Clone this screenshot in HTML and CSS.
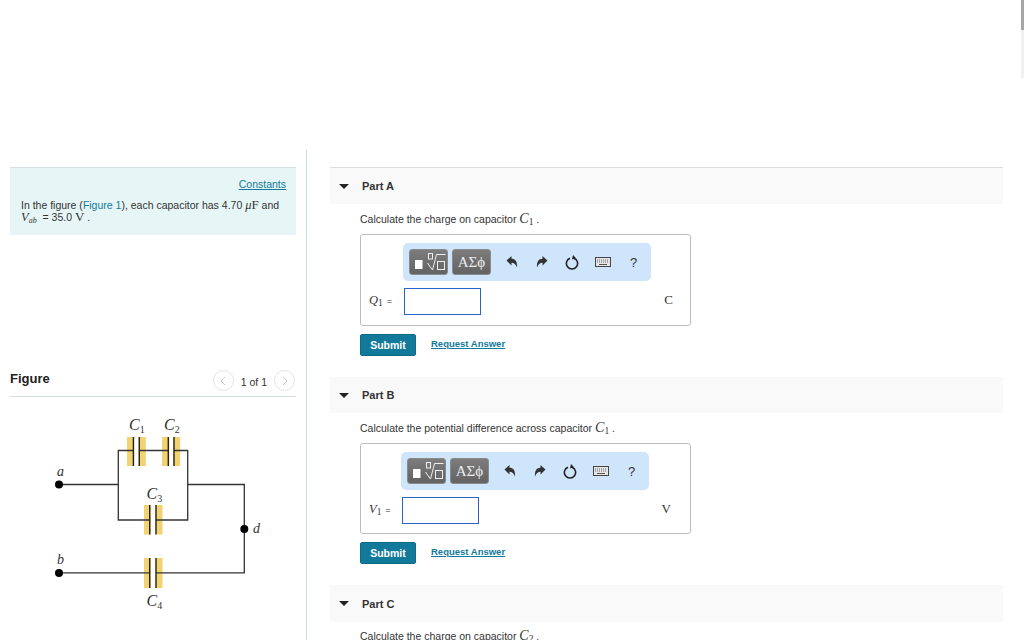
FILE: index.html
```html
<!DOCTYPE html>
<html lang="en">
<head>
<meta charset="utf-8">
<title>Capacitors</title>
<link rel="stylesheet" href="styles.css">
</head>
<body>
<div class="scroll"><div class="scroll-thumb"></div></div>
<main class="page">
  <section class="left">
    <div class="intro">
      <div class="constants"><a href="#">Constants</a></div>
      <p class="intro-text">In the figure (<span class="link">Figure 1</span>), each capacitor has 4.70 <span class="m">μ</span><span class="r">F</span> and<br><span class="m vab">V<sub>ab</sub></span> = 35.0 <span class="r">V</span> .</p>
    </div>
    <div class="fig-head">
      <h2>Figure</h2>
      <div class="pager">
        <span class="circle"><svg width="8" height="10" viewBox="0 0 8 10"><path d="M6 1L2 5l4 4" fill="none" stroke="#c4c4c4" stroke-width="1"/></svg></span>
        <span class="pager-text">1 of 1</span>
        <span class="circle"><svg width="8" height="10" viewBox="0 0 8 10"><path d="M2 1l4 4-4 4" fill="none" stroke="#c4c4c4" stroke-width="1"/></svg></span>
      </div>
    </div>
    <svg class="circuit" width="286" height="243" viewBox="10 397 286 243">
      <g fill="#f2d371">
        <rect x="127" y="437" width="7.3" height="29"/><rect x="138.5" y="437" width="7.3" height="29"/>
        <rect x="162" y="437" width="7.3" height="29"/><rect x="173.3" y="437" width="6.9" height="29"/>
        <rect x="144" y="505" width="6.9" height="29.5"/><rect x="155.6" y="505" width="6.9" height="29.5"/>
        <rect x="144" y="558" width="6.9" height="30"/><rect x="155.6" y="558" width="6.9" height="30"/>
      </g>
      <g fill="none" stroke="#333" stroke-width="1.3">
        <path d="M133.4 450.5H118.3V520H149.7M156 520H187.7V450.5H174M168.3 450.5H139.3"/>
        <path d="M59 484.5H118M188 484.5H244.3V572.8H156M149.7 572.8H59"/>
      </g>
      <g stroke="#222" stroke-width="1.4">
        <path d="M133.4 437V466M139.3 437V466M168.3 437V466M174 437V466"/>
        <path d="M149.7 505V534.5M156 505V534.5M149.7 558V588M156 558V588"/>
      </g>
      <g fill="#000"><circle cx="59" cy="484.5" r="4"/><circle cx="59" cy="573" r="4"/><circle cx="244.3" cy="529" r="4"/></g>
      <g class="lbl">
        <text x="129" y="430">C<tspan class="lbl-sub" dy="3">1</tspan></text>
        <text x="164" y="430">C<tspan class="lbl-sub" dy="3">2</tspan></text>
        <text x="146.5" y="499">C<tspan class="lbl-sub" dy="3">3</tspan></text>
        <text x="146.5" y="606">C<tspan class="lbl-sub" dy="3">4</tspan></text>
        <text class="pt" x="57" y="476">a</text><text class="pt" x="57" y="564">b</text><text class="pt" x="253" y="533">d</text>
      </g>
    </svg>
  </section>
  <section class="right">
    <article class="part part-a">
      <header class="part-head"><span class="tri"></span><h3>Part A</h3></header>
      <div class="part-body">
        <p class="prompt">Calculate the charge on capacitor <span class="m big">C</span><sub class="sub1">1</sub> .</p>
        <div class="answer">
          <div class="toolbar">
            <span class="tbtn t1"><svg width="36" height="24" viewBox="0 0 36 24"><rect x="4" y="10" width="7.500" height="9" fill="#fff"/><rect x="17.500" y="3.500" width="4" height="5.500" fill="none" stroke="#eee"/><path d="M16.500 13l5 7 4-15.500h9" fill="none" stroke="#eee"/><rect x="26.500" y="11.500" width="7" height="8" fill="none" stroke="#eee"/></svg></span>
            <span class="tbtn t2">ΑΣϕ</span>
            <svg class="ic ic-undo" width="12" height="12" viewBox="0 0 12 12"><path d="M0.5 4.500L5.500 0V2.800c4 0 6 3 5.500 8.700C10 8.500 8 6.800 5.500 6.800V9.500z" fill="#333"/></svg>
            <svg class="ic ic-redo" width="12" height="12" viewBox="0 0 12 12"><path d="M11.500 4.500L6.500 0V2.800c-4 0-6 3-5.500 8.700C2 8.500 4 6.800 6.500 6.800V9.500z" fill="#333"/></svg>
            <svg class="ic ic-reset" width="14" height="16" viewBox="0 0 14 16"><path d="M5 4.200a5.600 5.600 0 1 0 4 0" fill="none" stroke="#222" stroke-width="1.600"/><path d="M8 1l3 3.300-4 1.200z" fill="#222"/></svg>
            <svg class="ic ic-kbd" width="16" height="10" viewBox="0 0 16 10"><rect x="0.500" y="0.500" width="15" height="9" fill="#e6e6e6" stroke="#444"/><path d="M2 3h12M2 5h12" stroke="#666" stroke-dasharray="1 1"/><path d="M4 7.500h8" stroke="#555"/></svg>
            <span class="help">?</span>
          </div>
          <div class="row">
            <label class="var"><span class="m">Q</span><sub class="sub1">1</sub> <span class="eq">=</span></label>
            <span class="input"></span>
            <span class="unit">C</span>
          </div>
        </div>
        <div class="actions"><button class="submit">Submit</button><a class="req" href="#">Request Answer</a></div>
      </div>
    </article>
    <article class="part part-b">
      <header class="part-head"><span class="tri"></span><h3>Part B</h3></header>
      <div class="part-body">
        <p class="prompt">Calculate the potential difference across capacitor <span class="m big">C</span><sub class="sub1">1</sub> .</p>
        <div class="answer">
          <div class="toolbar">
            <span class="tbtn t1"><svg width="36" height="24" viewBox="0 0 36 24"><rect x="4" y="10" width="7.500" height="9" fill="#fff"/><rect x="17.500" y="3.500" width="4" height="5.500" fill="none" stroke="#eee"/><path d="M16.500 13l5 7 4-15.500h9" fill="none" stroke="#eee"/><rect x="26.500" y="11.500" width="7" height="8" fill="none" stroke="#eee"/></svg></span>
            <span class="tbtn t2">ΑΣϕ</span>
            <svg class="ic ic-undo" width="12" height="12" viewBox="0 0 12 12"><path d="M0.5 4.500L5.500 0V2.800c4 0 6 3 5.500 8.700C10 8.500 8 6.800 5.500 6.800V9.500z" fill="#333"/></svg>
            <svg class="ic ic-redo" width="12" height="12" viewBox="0 0 12 12"><path d="M11.500 4.500L6.500 0V2.800c-4 0-6 3-5.500 8.700C2 8.500 4 6.800 6.500 6.800V9.500z" fill="#333"/></svg>
            <svg class="ic ic-reset" width="14" height="16" viewBox="0 0 14 16"><path d="M5 4.200a5.600 5.600 0 1 0 4 0" fill="none" stroke="#222" stroke-width="1.600"/><path d="M8 1l3 3.300-4 1.200z" fill="#222"/></svg>
            <svg class="ic ic-kbd" width="16" height="10" viewBox="0 0 16 10"><rect x="0.500" y="0.500" width="15" height="9" fill="#e6e6e6" stroke="#444"/><path d="M2 3h12M2 5h12" stroke="#666" stroke-dasharray="1 1"/><path d="M4 7.500h8" stroke="#555"/></svg>
            <span class="help">?</span>
          </div>
          <div class="row">
            <label class="var"><span class="m">V</span><sub class="sub1">1</sub> <span class="eq">=</span></label>
            <span class="input"></span>
            <span class="unit">V</span>
          </div>
        </div>
        <div class="actions"><button class="submit">Submit</button><a class="req" href="#">Request Answer</a></div>
      </div>
    </article>
    <article class="part part-c">
      <header class="part-head"><span class="tri"></span><h3>Part C</h3></header>
      <div class="part-body">
        <p class="prompt">Calculate the charge on capacitor <span class="m big">C</span><sub class="sub1">2</sub> .</p>
      </div>
    </article>
  </section>
</main>
</body>
</html>
```
FILE: styles.css
```css
* { box-sizing: border-box; }
html, body { margin: 0; height: 640px; overflow: hidden; background: #fff; }
body { font-family: "Liberation Sans", Arial, sans-serif; font-size: 10.5px; color: #333; }
p, h2, h3 { margin: 0; }
a { color: #117a9b; }
.link { color: #117a9b; }
.m { font-family: "Liberation Serif", serif; font-style: italic; font-size: 12.5px; line-height: 0; }
.m.big { font-size: 14px; }
.m.vab { margin-right: 3px; }
.r { font-family: "Liberation Serif", serif; font-size: 13px; line-height: 0; }
sub { font-size: 8px; line-height: 0; vertical-align: -2px; font-style: italic; }
.sub1 { font-family: "Liberation Serif", serif; font-style: normal; font-size: 9.5px; }
.eq { font-size: 9px; margin-left: 1px; }

.scroll { position: absolute; top: 0; right: 0; width: 3px; height: 78px; background: #f1f1f1; }
.scroll-thumb { height: 30px; background: #a6a6a6; }

.page { display: flex; padding-top: 150px; height: 640px; }
.left { width: 307px; height: 490px; padding: 17px 10px 0; border-right: 1px solid #c8d9e9; flex: none; }
.intro { width: 286px; height: 68px; background: #e6f6f7; border-top: 1px solid #d3dfe3; padding: 10px 10px 0 11px; }
.constants { text-align: right; line-height: 13px; }
.intro-text { margin-top: 8px; line-height: 12px; }
.fig-head { width: 286px; height: 30px; margin-top: 132px; border-bottom: 1px solid #d5dde2; display: flex; justify-content: space-between; align-items: flex-start; padding-top: 3px; }
.fig-head h2 { font-size: 13px; font-weight: bold; color: #222; line-height: 16px; margin-top: 1px; }
.pager { display: flex; align-items: center; gap: 7px; font-size: 10.5px; margin-right: 1px; }
.pager-text { padding-top: 2px; }
.circle { width: 21px; height: 21px; border: 1px solid #e4e4e4; border-radius: 50%; display: flex; align-items: center; justify-content: center; }
.circuit { display: block; }
.lbl text { font-family: "Liberation Serif", serif; font-style: italic; font-size: 16px; fill: #333; }
.lbl text.pt { font-size: 14px; }
.lbl .lbl-sub { font-size: 10px; font-style: normal; }

.right { flex: 1; padding: 17px 21px 0 23px; }
.part-head { height: 37px; background: #f9f9f9; display: flex; align-items: center; padding-left: 9px; }
.part-a .part-head { border-top: 1px solid #dcdcdc; }
.part-b, .part-c { margin-top: 21px; }
.part-b .part-head { height: 36px; }
.tri { width: 0; height: 0; border-left: 5px solid transparent; border-right: 5px solid transparent; border-top: 5px solid #222; }
h3 { font-size: 11px; font-weight: bold; margin-left: 13px; color: #333; }
.part-body { padding: 8px 0 0 30px; }
.part-c .part-body { padding-top: 7px; }
.prompt { line-height: 14px; white-space: nowrap; }
.answer { width: 331px; height: 92px; margin-top: 8px; border: 1px solid #bdbdbd; border-radius: 3px; padding: 8px 0 0 42px; }
.part-b .answer { height: 91px; padding-left: 40px; }
.toolbar { width: 248px; height: 38px; background: #cfe5fb; border-radius: 5px; display: flex; align-items: center; padding-left: 6px; }
.tbtn { width: 39px; height: 26px; border-radius: 3px; background: linear-gradient(#7c7c7c, #636363); border: 1px solid #8a8a8a; color: #eee; display: flex; align-items: center; justify-content: center; flex: none; }
.t1 svg { display: block; }
.t2 { margin-left: 4px; font-family: "Liberation Serif", serif; font-size: 15px; }
.ic { flex: none; display: block; }
.ic-undo { margin-left: 15px; }
.ic-redo { margin-left: 18px; }
.ic-reset { margin-left: 17px; }
.ic-kbd { margin-left: 16px; }
.help { margin-left: 19px; font-size: 13px; color: #333; }
.row { display: flex; align-items: center; margin: 7px 0 0 -34px; width: 318px; height: 27px; }
.var { width: 35px; white-space: nowrap; padding-bottom: 3px; }
.part-b .row { margin-left: -32px; }
.part-b .var { width: 33px; }
.input { width: 77px; height: 27px; border: 1px solid #2a63c9; background: #fff; flex: none; }
.unit { margin-left: auto; font-family: "Liberation Serif", serif; font-size: 13px; padding: 0 14px 3px 0; }
.part-b .unit { padding-right: 16px; }
.actions { display: flex; align-items: center; margin-top: 8px; height: 22px; }
.submit { width: 56px; height: 22px; background: #117a9b; border: 1px solid #0e6a87; border-radius: 2px; color: #fff; font: bold 10.5px "Liberation Sans", Arial, sans-serif; padding: 0; }
.req { margin-left: 15px; font-size: 9.5px; font-weight: bold; position: relative; top: -2px; }
```
